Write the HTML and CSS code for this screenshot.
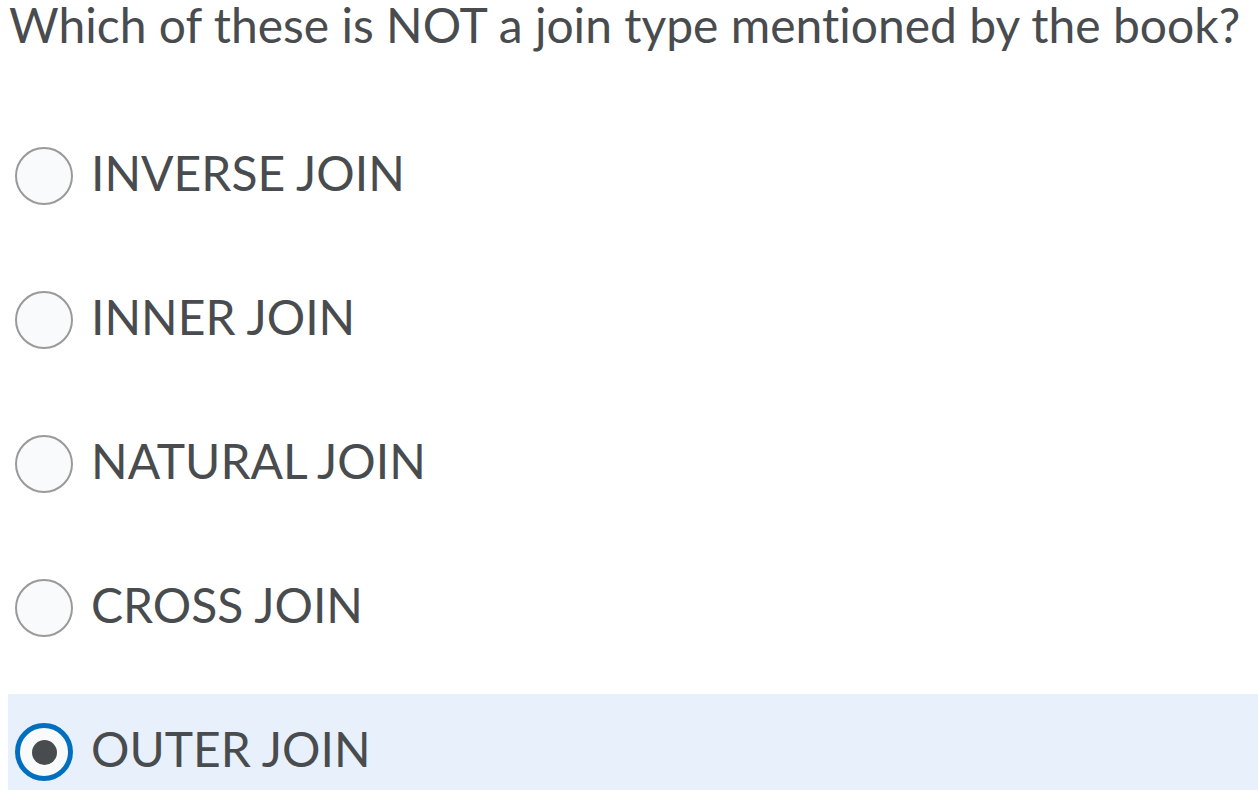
FILE: index.html
```html
<!DOCTYPE html>
<html>
<head>
<meta charset="utf-8">
<link rel="stylesheet" href="styles.css">
</head>
<body>
<div class="quiz">
  <div class="question">Which of these is NOT a join type mentioned by the book?</div>
  <div class="options">
    <label class="option"><span class="radio"></span><span class="label">INVERSE JOIN</span></label>
    <label class="option"><span class="radio"></span><span class="label">INNER JOIN</span></label>
    <label class="option"><span class="radio"></span><span class="label">NATURAL JOIN</span></label>
    <label class="option"><span class="radio"></span><span class="label">CROSS JOIN</span></label>
    <label class="option selected"><span class="radio"></span><span class="label">OUTER JOIN</span></label>
  </div>
</div>
</body>
</html>
```
FILE: styles.css
```css
html, body {
  margin: 0;
  padding: 0;
  background: #ffffff;
  overflow: hidden;
}
body {
  font-family: Lato, "Open Sans", sans-serif;
  color: #494c4e;
  font-variant-ligatures: none;
}
.quiz {
  padding-left: 8px;
}
.question {
  font-size: 48px;
  line-height: 50px;
  padding-left: 1px;
  height: 118px;
  white-space: nowrap;
}
.options {
  display: flex;
  flex-direction: column;
  gap: 28px;
}
.option {
  display: flex;
  align-items: center;
  height: 116px;
  padding-left: 7px;
}
.option.selected {
  background: #e8f0fb;
}
.radio {
  box-sizing: border-box;
  width: 58px;
  height: 58px;
  border-radius: 50%;
  border: 2px solid #9a9a9a;
  background: #f9fafc;
  flex: none;
  display: flex;
  align-items: center;
  justify-content: center;
}
.selected .radio {
  border: 5px solid #006fbf;
}
.selected .radio::after {
  content: "";
  width: 25px;
  height: 25px;
  border-radius: 50%;
  background: #494c4e;
}
.label {
  font-size: 48px;
  line-height: 56px;
  margin-left: 18px;
  margin-bottom: 6px;
}
```
